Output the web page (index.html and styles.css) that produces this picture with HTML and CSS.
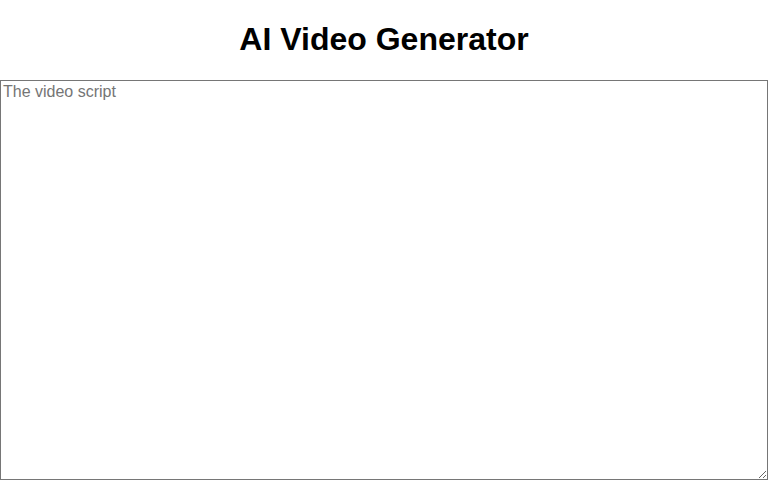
FILE: index.html
```html
<!DOCTYPE html>
<html lang="en">
<head>
<meta charset="utf-8">
<title>AI Video Generator</title>
<link rel="stylesheet" href="styles.css">
</head>
<body>
<h1 class="title">AI Video Generator</h1>
<textarea class="script-input" placeholder="The video script"></textarea>
</body>
</html>
```

FILE: styles.css
```css
html, body {
  margin: 0;
  padding: 0;
  background: #ffffff;
}
body {
  font-family: "Liberation Sans", Arial, sans-serif;
}
.title {
  font-size: 32px;
  font-weight: bold;
  text-align: center;
  margin: 21.44px 0;
  color: #000;
}
.script-input {
  display: block;
  box-sizing: border-box;
  width: 100%;
  height: 400px;
  margin: 0;
  padding: 2px;
  border: 1px solid #767676;
  font-family: "Liberation Sans", Arial, sans-serif;
  font-size: 16px;
  color: #000;
  background: #fff;
}
.script-input::placeholder {
  color: #757575;
}
```
